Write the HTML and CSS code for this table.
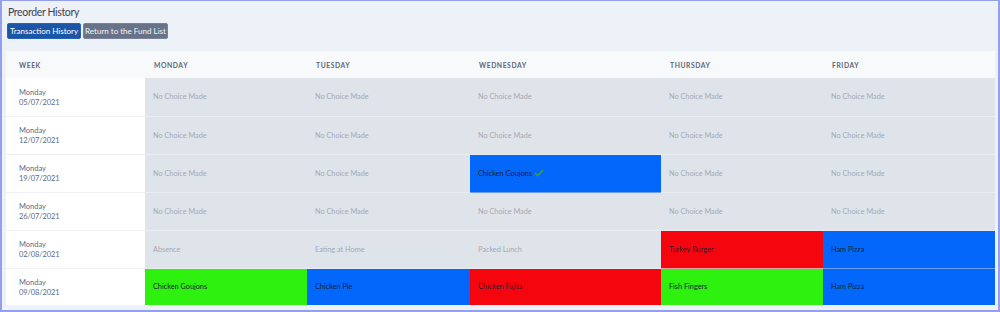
FILE: index.html
```html
<!DOCTYPE html>
<html lang="en">
<head>
<meta charset="utf-8">
<title>Preorder History</title>
<link rel="stylesheet" href="styles.css">
</head>
<body>
<div class="frame">
  <h1 class="title">Preorder History</h1>
  <div class="actions">
    <button class="btn btn-primary">Transaction History</button>
    <button class="btn btn-secondary">Return to the Fund List</button>
  </div>
  <table class="history">
    <colgroup>
      <col class="c-week"><col class="c-mon"><col class="c-tue"><col class="c-wed"><col class="c-thu"><col class="c-fri">
    </colgroup>
    <thead>
      <tr>
        <th class="th-week">Week</th><th>Monday</th><th>Tuesday</th><th>Wednesday</th><th>Thursday</th><th>Friday</th>
      </tr>
    </thead>
    <tbody>
      <tr>
        <td class="week"><span class="day">Monday</span><span class="date">05/07/2021</span></td>
        <td class="none">No Choice Made</td><td class="none">No Choice Made</td><td class="none">No Choice Made</td><td class="none">No Choice Made</td><td class="none">No Choice Made</td>
      </tr>
      <tr>
        <td class="week"><span class="day">Monday</span><span class="date">12/07/2021</span></td>
        <td class="none">No Choice Made</td><td class="none">No Choice Made</td><td class="none">No Choice Made</td><td class="none">No Choice Made</td><td class="none">No Choice Made</td>
      </tr>
      <tr>
        <td class="week"><span class="day">Monday</span><span class="date">19/07/2021</span></td>
        <td class="none">No Choice Made</td><td class="none">No Choice Made</td>
        <td class="meal blue">Chicken Goujons<svg class="tick" viewBox="0 0 12 10" width="10" height="8"><path d="M1 5.2 L4.3 8.3 L11 1.4" fill="none" stroke="#3f9a3c" stroke-width="2.3" stroke-linejoin="round"/></svg></td>
        <td class="none">No Choice Made</td><td class="none">No Choice Made</td>
      </tr>
      <tr>
        <td class="week"><span class="day">Monday</span><span class="date">26/07/2021</span></td>
        <td class="none">No Choice Made</td><td class="none">No Choice Made</td><td class="none">No Choice Made</td><td class="none">No Choice Made</td><td class="none">No Choice Made</td>
      </tr>
      <tr>
        <td class="week"><span class="day">Monday</span><span class="date">02/08/2021</span></td>
        <td class="none">Absence</td><td class="none">Eating at Home</td><td class="none">Packed Lunch</td>
        <td class="meal red">Turkey Burger</td><td class="meal blue">Ham Pizza</td>
      </tr>
      <tr>
        <td class="week"><span class="day">Monday</span><span class="date">09/08/2021</span></td>
        <td class="meal green">Chicken Goujons</td><td class="meal blue">Chicken Pie</td><td class="meal red">Chicken Fajita</td>
        <td class="meal green">Fish Fingers</td><td class="meal blue">Ham Pizza</td>
      </tr>
    </tbody>
  </table>
</div>
</body>
</html>
```

FILE: styles.css
```css
* { box-sizing: border-box; }

html, body {
  margin: 0;
  padding: 0;
  width: 1000px;
  height: 312px;
  overflow: hidden;
}

body {
  font-family: "Lato", "Noto Sans", sans-serif;
  background: #edf1f8;
}

.frame {
  width: 1000px;
  height: 312px;
  border: 2px solid #959ff2;
  border-top-width: 1px;
  padding: 3px 3px 0 4px;
  background: #edf1f8;
}

.title {
  margin: 0;
  padding-left: 2px;
  font-size: 10.5px;
  font-weight: 400;
  letter-spacing: -0.35px;
  line-height: 16px;
  color: #3b4352;
}

.actions {
  display: flex;
  gap: 2px;
  margin-top: 3px;
  margin-left: 1px;
}

.btn {
  height: 16px;
  padding: 0;
  border: 1px solid transparent;
  border-radius: 2px;
  font-family: inherit;
  font-size: 8px;
  line-height: 14px;
  white-space: nowrap;
  text-align: center;
  color: #ffffff;
  cursor: pointer;
}

.btn-primary {
  width: 74px;
  background: #1b56a6;
  border-color: #2a63b0;
}

.btn-secondary {
  width: 85px;
  background: #687389;
  border-color: #7a8498;
  color: #f2f4f8;
}

.history {
  margin-top: 12px;
  width: 989px;
  border-collapse: collapse;
  table-layout: fixed;
}

.c-week { width: 139px; }
.c-mon { width: 162px; }
.c-tue { width: 163px; }
.c-wed { width: 191px; }
.c-thu { width: 162px; }
.c-fri { width: 172px; }

.history th {
  height: 27px;
  padding: 1px 0 0 9px;
  background: #f8f9fb;
  text-align: left;
  font-size: 6.8px;
  font-weight: 700;
  letter-spacing: 0.55px;
  text-transform: uppercase;
  color: #5f6778;
}

.history th.th-week { padding-left: 13px; }

.history td {
  height: 38px;
  padding: 1px 0 0 8px;
  border-bottom: 1px solid #e9ecf1;
  font-size: 7.3px;
  line-height: 10px;
  vertical-align: middle;
  white-space: nowrap;
}

.history tbody tr:last-child td { height: 37px; border-bottom: 0; }

.history td.week {
  padding: 2px 0 0 13px;
  background: #ffffff;
  border-bottom-color: #eef0f4;
  color: #5a6a86;
}

.day, .date {
  display: block;
  font-size: 7.5px;
  line-height: 10px;
}

.date { letter-spacing: -0.1px; }

.history td.none {
  background: #dfe3ea;
  color: #a4aab4;
}

.history td.meal { color: #1c2233; }

.blue { background: #0367fc; }
.red { background: #f5060f; }
.green { background: #2ef10f; }

.history td.blue { border-bottom-color: #6f9cee; }
.history td.red { border-bottom-color: #e5a0a4; }

.tick {
  margin-left: 2px;
  vertical-align: -1px;
}
```
